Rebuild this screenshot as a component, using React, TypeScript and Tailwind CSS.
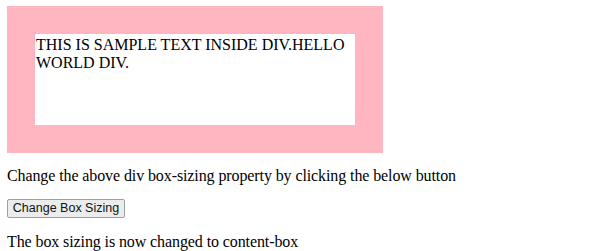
export default function App() {
  return (
    <div className="pt-[6px] px-[7px] text-black text-[16px] leading-[18px]" style={{ fontFamily: '"Liberation Serif", serif' }}>
      <div className="w-[376px] bg-[#ffb6c1] p-[28px]">
        <div className="bg-white h-[91px] pl-[1px] pt-[2px]">
          THIS IS SAMPLE TEXT INSIDE DIV.HELLO WORLD DIV.
        </div>
      </div>
      <p className="mt-[14px] tracking-[-0.1px]">Change the above div box-sizing property by clicking the below button</p>
      <button
        className="mt-[14px] h-[19px] w-[118px] px-0 whitespace-nowrap text-[12.5px] leading-[15px] border border-[#a0a0a0] rounded-[2px] bg-[#ececec] text-[#111]"
        style={{ fontFamily: '"Liberation Sans", Arial, sans-serif' }}
      >
        Change Box Sizing
      </button>
      <p className="mt-[15px] tracking-[-0.1px]">The box sizing is now changed to content-box</p>
    </div>
  );
}
